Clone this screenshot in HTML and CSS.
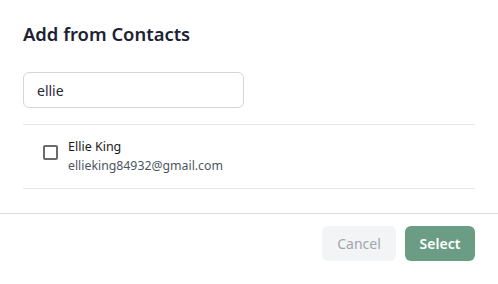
FILE: index.html
```html
<!DOCTYPE html>
<html lang="en">
<head>
  <meta charset="UTF-8" />
  <title>Add from Contacts</title>
  <link rel="stylesheet" href="styles.css">
</head>
<body>
  <div class="modal">
    <div class="modal-body">
      <h2>Add from Contacts</h2>
      <input type="text" class="search-input" value="ellie" />
      <ul class="contact-list">
        <li class="contact-row">
          <span class="checkbox"></span>
          <div class="contact-info">
            <div class="contact-name">Ellie King</div>
            <div class="contact-email">ellieking84932@gmail.com</div>
          </div>
        </li>
      </ul>
    </div>
    <div class="modal-footer">
      <button class="btn btn-cancel">Cancel</button>
      <button class="btn btn-select">Select</button>
    </div>
  </div>
</body>
</html>
```

FILE: styles.css
```css
* {
  box-sizing: border-box;
  margin: 0;
  padding: 0;
}

body {
  background-color: #fff;
  font-family: "Noto Sans", "Open Sans", sans-serif;
}

.modal {
  width: 498px;
  height: 284px;
  background-color: #fff;
}

.modal-body {
  padding: 20px 23px 24px;
}

h2 {
  font-size: 18.4px;
  line-height: 28px;
  font-weight: 600;
  color: #1d2232;
}

.search-input {
  display: block;
  margin-top: 24px;
  width: 221px;
  height: 36px;
  padding: 0 13px;
  border: 1px solid #d4d6dc;
  border-radius: 6px;
  font-family: inherit;
  font-size: 14px;
  color: #1f2937;
  outline: none;
}

.contact-list {
  list-style: none;
  margin-top: 16px;
  border-top: 1px solid #e5e7eb;
}

.contact-row {
  display: flex;
  align-items: flex-start;
  gap: 10px;
  padding: 12px 0 13px 20px;
  border-bottom: 1px solid #e5e7eb;
}

.checkbox {
  width: 15px;
  height: 15px;
  margin-top: 8px;
  border: 2px solid #6b6b6b;
  border-radius: 2px;
  flex-shrink: 0;
}

.contact-name {
  font-size: 12.5px;
  line-height: 19px;
  color: #1a1a1a;
}

.contact-email {
  font-size: 12.3px;
  line-height: 19px;
  color: #4b5563;
}

.modal-footer {
  display: flex;
  justify-content: flex-end;
  gap: 9px;
  padding: 12px 23px;
  border-top: 1px solid #dcdcdc;
}

.btn {
  height: 35px;
  border: none;
  border-radius: 6px;
  font-family: inherit;
  font-size: 14px;
  font-weight: 600;
  cursor: pointer;
}

.btn-cancel {
  width: 74px;
  background-color: #f3f4f6;
  color: #a1a5ad;
  font-weight: 400;
}

.btn-select {
  width: 70px;
  background-color: #6b9d85;
  color: #fff;
}
```
